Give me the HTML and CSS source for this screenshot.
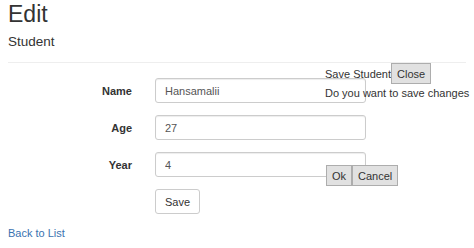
FILE: index.html
```html
<!DOCTYPE html>
<html lang="en">

<head>
  <meta charset="UTF-8">
  <title>Edit</title>
  <link rel="stylesheet" href="styles.css">
</head>

<body>
  <div class="container">
    <h2>Edit</h2>
    <h4>Student</h4>
    <hr>

    <form class="form-horizontal">
      <div class="form-group">
        <label for="name">Name</label>
        <input type="text" id="name" value="Hansamalii">
      </div>
      <div class="form-group">
        <label for="age">Age</label>
        <input type="text" id="age" value="27">
      </div>
      <div class="form-group">
        <label for="year">Year</label>
        <input type="text" id="year" value="4">
      </div>
      <div class="form-group">
        <span class="spacer"></span>
        <button type="button" class="btn">Save</button>
      </div>
    </form>

    <a class="back" href="#">Back to List</a>
  </div>

  <div class="dialog">
    <div class="dialog-title">Save Student<button class="plain">Close</button></div>
    <div class="dialog-body">Do you want to save changes</div>
  </div>
  <div class="dialog-buttons">
    <button class="plain">Ok</button><button class="plain">Cancel</button>
  </div>
</body>

</html>
```

FILE: styles.css
```css
body {
  margin: 0;
  font-family: "Liberation Sans", Arial, sans-serif;
  font-size: 11px;
  color: #333;
  background: #fff;
}

.container {
  padding: 0 8px;
}

h2 {
  margin: 0;
  font-size: 23px;
  font-weight: normal;
  line-height: 28px;
}

h4 {
  margin: 4px 0 0;
  font-size: 13.5px;
  font-weight: normal;
  line-height: 20px;
}

hr {
  margin: 10px 0 0;
  border: 0;
  border-top: 1px solid #eee;
}

.form-horizontal {
  padding-top: 15px;
}

.form-group {
  display: flex;
  align-items: center;
  margin-bottom: 12px;
}

.form-group label,
.form-group .spacer {
  width: 124px;
  padding-right: 23px;
  text-align: right;
  font-weight: bold;
}

.form-group input {
  width: 211px;
  height: 25px;
  box-sizing: border-box;
  padding: 3px 9px;
  border: 1px solid #ccc;
  border-radius: 3px;
  font-family: inherit;
  font-size: 11px;
  color: #555;
  box-shadow: inset 0 1px 1px rgba(0, 0, 0, 0.075);
}

.btn {
  height: 25px;
  padding: 3px 9px;
  background: #fff;
  border: 1px solid #ccc;
  border-radius: 3px;
  font-family: inherit;
  font-size: 11px;
  color: #333;
}

.back {
  display: inline-block;
  margin-top: 1px;
  color: #3a72b0;
  text-decoration: none;
}

.dialog {
  position: absolute;
  left: 325px;
  top: 63px;
  white-space: nowrap;
}

.dialog-body {
  margin-top: 3px;
}

.plain {
  height: 21px;
  padding: 1px 5px;
  background: #e1e1e1;
  border: 1px solid #adadad;
  border-radius: 0;
  font-family: inherit;
  font-size: 11px;
  color: #333;
}

.dialog-buttons {
  position: absolute;
  left: 326px;
  top: 165px;
  white-space: nowrap;
}
```
